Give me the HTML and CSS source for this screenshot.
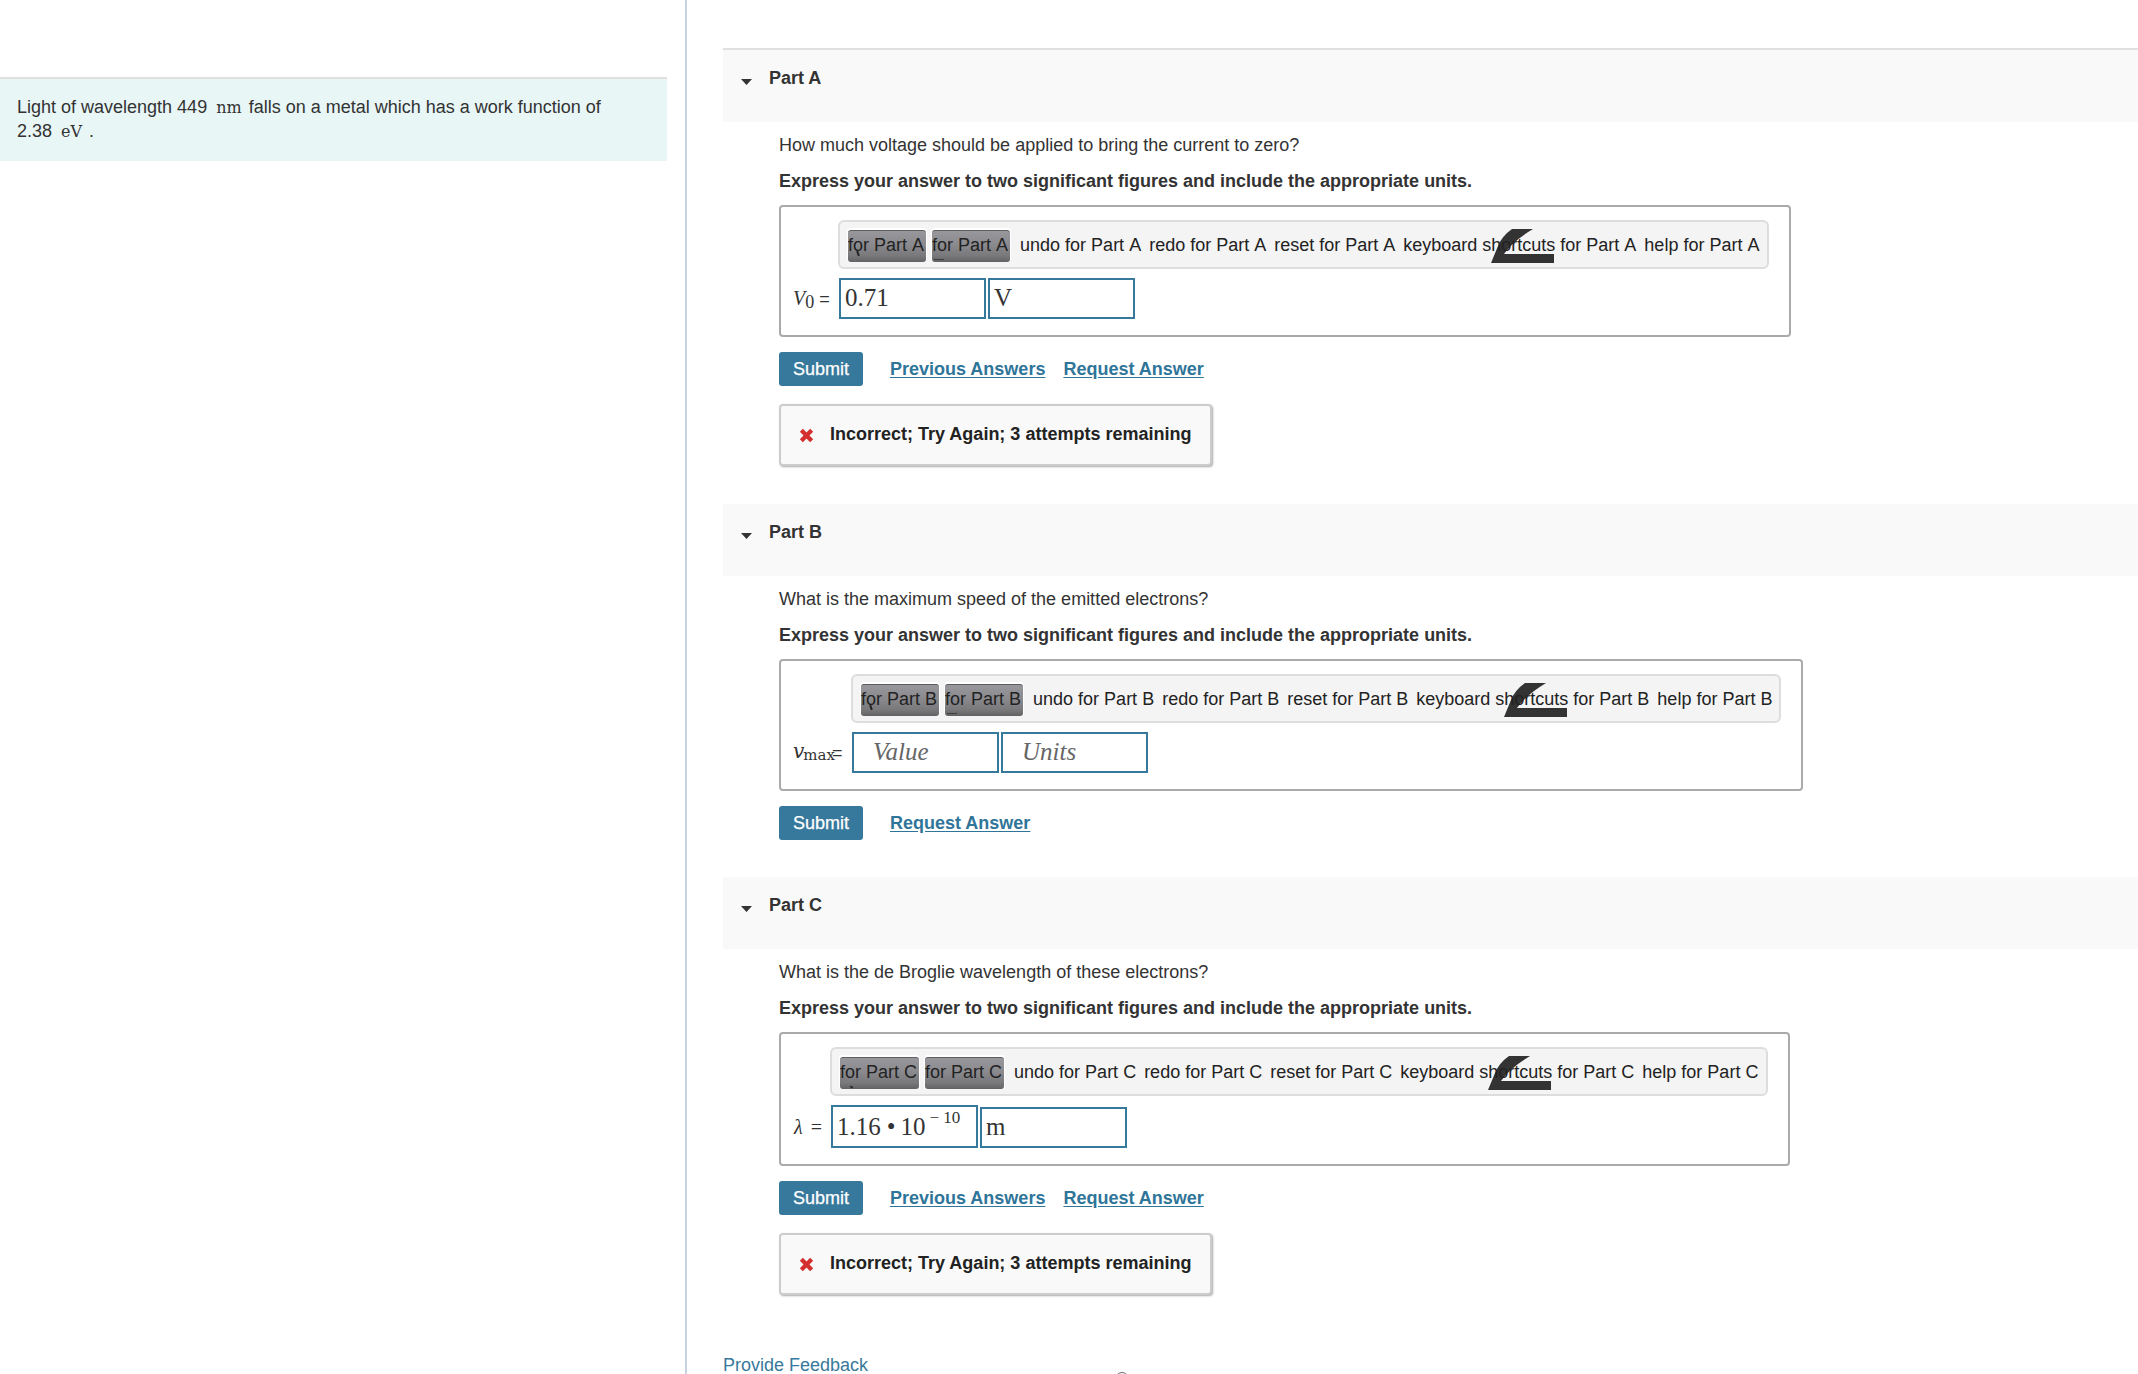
FILE: index.html
```html
<!DOCTYPE html>
<html lang="en">
<head>
<meta charset="utf-8">
<title>Part A, Part B, Part C</title>
<link rel="stylesheet" href="styles.css">
</head>
<body>
<aside class="intro-col">
  <div class="intro">Light of wavelength 449 <span class="unit">nm</span> falls on a metal which has a work function of 2.38 <span class="unit">eV</span> .</div>
</aside>
<main class="parts">

  <section class="part part-first">
    <header class="part-head">
      <svg class="caret" viewBox="0 0 11 6"><path d="M0 0H11L5.5 6Z"/></svg>
      <h2>Part A</h2>
    </header>
    <div class="part-body">
      <p class="q">How much voltage should be applied to bring the current to zero?</p>
      <p class="q strong">Express your answer to two significant figures and include the appropriate units.</p>
      <div class="answer">
        <div class="math label-a"><i>V</i><sub>0</sub><span class="eq">=</span></div>
        <div class="toolbar toolbar-a">
          <div class="btns"><span class="btn tail">for Part A</span><span class="btn dash">for Part A</span></div>
          <span>undo for Part A</span><span>redo for Part A</span><span>reset for Part A</span>
          <span class="kbd"><svg class="swoosh" viewBox="0 0 63 34"><path d="M42 0H21Q11 7 7 17L0 34H63V25H13Q22 12 42 0Z"/></svg><span class="kbd-text">keyboard shortcuts for Part A</span></span>
          <span>help for Part A</span>
        </div>
        <div class="inputs">
          <div class="field">0.71</div>
          <div class="field">V</div>
        </div>
      </div>
      <div class="actions">
        <button class="submit">Submit</button>
        <a class="link" href="#">Previous Answers</a>
        <a class="link" href="#">Request Answer</a>
      </div>
      <div class="feedback">
        <svg class="x" viewBox="0 0 14 14"><path d="M2.2 2.2L11.8 11.8M11.8 2.2L2.2 11.8"/></svg>
        <span>Incorrect; Try Again; 3 attempts remaining</span>
      </div>
    </div>
  </section>

  <section class="part part-second">
    <header class="part-head">
      <svg class="caret" viewBox="0 0 11 6"><path d="M0 0H11L5.5 6Z"/></svg>
      <h2>Part B</h2>
    </header>
    <div class="part-body">
      <p class="q">What is the maximum speed of the emitted electrons?</p>
      <p class="q strong">Express your answer to two significant figures and include the appropriate units.</p>
      <div class="answer">
        <div class="math label-b"><i class="vee">v</i><span class="maxsub">max</span><span class="eq eq-tight">=</span></div>
        <div class="toolbar">
          <div class="btns"><span class="btn tail">for Part B</span><span class="btn dash">for Part B</span></div>
          <span>undo for Part B</span><span>redo for Part B</span><span>reset for Part B</span>
          <span class="kbd"><svg class="swoosh" viewBox="0 0 63 34"><path d="M42 0H21Q11 7 7 17L0 34H63V25H13Q22 12 42 0Z"/></svg><span class="kbd-text">keyboard shortcuts for Part B</span></span>
          <span>help for Part B</span>
        </div>
        <div class="inputs">
          <div class="field placeholder">Value</div>
          <div class="field placeholder">Units</div>
        </div>
      </div>
      <div class="actions">
        <button class="submit">Submit</button>
        <a class="link" href="#">Request Answer</a>
      </div>
    </div>
  </section>

  <section class="part">
    <header class="part-head">
      <svg class="caret" viewBox="0 0 11 6"><path d="M0 0H11L5.5 6Z"/></svg>
      <h2>Part C</h2>
    </header>
    <div class="part-body">
      <p class="q">What is the de Broglie wavelength of these electrons?</p>
      <p class="q strong">Express your answer to two significant figures and include the appropriate units.</p>
      <div class="answer answer-tall">
        <div class="math label-c"><i>λ</i><span class="eq eq-wide">=</span></div>
        <div class="toolbar toolbar-c">
          <div class="btns"><span class="btn grave">for Part C</span><span class="btn">for Part C</span></div>
          <span>undo for Part C</span><span>redo for Part C</span><span>reset for Part C</span>
          <span class="kbd"><svg class="swoosh" viewBox="0 0 63 34"><path d="M42 0H21Q11 7 7 17L0 34H63V25H13Q22 12 42 0Z"/></svg><span class="kbd-text">keyboard shortcuts for Part C</span></span>
          <span>help for Part C</span>
        </div>
        <div class="inputs">
          <div class="field field-tall">1.16<span class="dot">•</span>10<sup class="exp">− 10</sup></div>
          <div class="field">m</div>
        </div>
      </div>
      <div class="actions">
        <button class="submit">Submit</button>
        <a class="link" href="#">Previous Answers</a>
        <a class="link" href="#">Request Answer</a>
      </div>
      <div class="feedback">
        <svg class="x" viewBox="0 0 14 14"><path d="M2.2 2.2L11.8 11.8M11.8 2.2L2.2 11.8"/></svg>
        <span>Incorrect; Try Again; 3 attempts remaining</span>
      </div>
    </div>
  </section>

  <a class="provide" href="#">Provide Feedback</a>
</main>
<div class="peek"></div>
</body>
</html>
```
FILE: styles.css
```css
* { box-sizing: border-box; }
html, body { margin: 0; padding: 0; }
body {
  position: relative;
  display: flex;
  width: 2138px;
  height: 1374px;
  overflow: hidden;
  background: #fff;
  color: #333;
  font: 18px/24px "Liberation Sans", Arial, sans-serif;
}

/* left column */
.intro-col {
  flex: 0 0 687px;
  padding-top: 77px;
  border-right: 2px solid #c5d3e0;
}
.intro {
  width: 667px;
  height: 84px;
  padding: 16px 40px 0 17px;
  border-top: 2px solid #e0e0e0;
  background: #e8f6f6;
}
.unit {
  font: 16px/1 "DejaVu Serif", serif;
  margin: 0 2px 0 4px;
}

/* right column */
.parts {
  flex: 1;
  min-width: 0;
  padding: 48px 0 0 36px;
}
.part { margin-bottom: 36px; }
.part-first { margin-bottom: 38px; }
.part-second { margin-bottom: 37px; }
.part-head {
  display: flex;
  align-items: flex-start;
  height: 72px;
  padding: 16px 0 0 18px;
  background: #f9f9f9;
}
.part-first .part-head { border-top: 2px solid #e0e0e0; height: 74px; }
.part-head h2 {
  margin: 0;
  font-size: 18px;
  line-height: 24px;
  font-weight: 700;
}
.caret {
  width: 11px;
  height: 6px;
  margin: 13px 17px 0 0;
  fill: #333;
}
.part-body { padding: 11px 0 0 56px; }
.q { margin: 0 0 12px; }
.strong { font-weight: 700; }

/* answer box */
.answer {
  display: grid;
  grid-template-columns: auto auto;
  column-gap: 8px;
  row-gap: 9px;
  align-items: center;
  width: fit-content;
  padding: 13px 20px 16px 12px;
  border: 2px solid #aaa;
  border-radius: 4px;
}
.math {
  grid-row: 2;
  grid-column: 1;
  font-family: "Liberation Serif", serif;
  font-size: 20px;
  line-height: 24px;
  white-space: nowrap;
}
.math sub { font-size: 18px; line-height: 0; vertical-align: -3px; }
.eq { font: 18px/24px "Liberation Sans", sans-serif; margin-left: 5px; }
.label-a { width: 37px; }
.label-b { width: 50px; }
.label-c { width: 29px; padding-left: 1px; }
.vee { font: italic 20px/24px "DejaVu Serif", serif; }
.maxsub { font: 15px/24px "DejaVu Serif", serif; vertical-align: -2px; margin-left: -1px; }
.eq-tight { margin-left: -3px; vertical-align: -1px; }
.eq-wide { margin-left: 8px; font-family: "Liberation Serif", serif; font-size: 20px; }

.toolbar {
  grid-row: 1;
  grid-column: 2;
  position: relative;
  display: flex;
  align-items: center;
  gap: 8px;
  height: 49px;
  padding: 5px 7px 4px 8px;
  border: 2px solid #ddd;
  border-radius: 6px;
  background: #f4f4f4;
  color: #222;
  white-space: nowrap;
}
.toolbar-a { font-kerning: none; padding-right: 8px; }
.toolbar-c { padding-right: 8px; }
.btns { display: flex; gap: 6px; margin-right: 2px; position: relative; top: 1px; }
.btn {
  position: relative;
  display: block;
  height: 32px;
  padding: 0 2px 0 0;
  line-height: 28px;
  border-radius: 3px;
  border-top: 1px solid #5e5e60;
  background: linear-gradient(#98989c 0, #8a8a8e 45%, #79797c 80%, #626264 100%);
  box-shadow: 0 -1px 0 1px #fff;
  color: #222;
}
.tail::after {
  content: "";
  position: absolute;
  left: 9px;
  top: 20px;
  width: 2px;
  height: 5px;
  background: #222;
  transform: rotate(-20deg);
}
.dash::after {
  content: "";
  position: absolute;
  left: 2px;
  bottom: 2px;
  width: 10px;
  height: 1px;
  background: #3f3f40;
}
.grave::after {
  content: "";
  position: absolute;
  left: 10px;
  bottom: 1px;
  width: 3px;
  height: 2px;
  background: #2a2a2a;
  transform: rotate(30deg);
}
.kbd { position: relative; }
.kbd-text { position: relative; }
.swoosh {
  position: absolute;
  left: 88px;
  top: -4px;
  width: 63px;
  height: 34px;
  fill: #333;
}

/* inputs */
.inputs {
  grid-row: 2;
  grid-column: 2;
  display: flex;
  align-items: flex-end;
  gap: 2px;
  margin-left: 1px;
}
.field {
  width: 147px;
  height: 41px;
  padding: 0 4px;
  border: 2px solid #37799c;
  background: #fff;
  font: 25px/35px "Liberation Serif", serif;
  white-space: nowrap;
}
.field-tall { height: 43px; line-height: 39px; }
.placeholder {
  padding-left: 19px;
  color: #666;
  font-style: italic;
}
.dot { margin: 0 5px 0 6px; font-size: 25px; }
.exp {
  font-size: 17px;
  line-height: 0;
  vertical-align: 12px;
  margin-left: 4px;
}

/* actions */
.actions {
  display: flex;
  align-items: center;
  gap: 18px;
  margin-top: 15px;
}
.submit {
  width: 84px;
  height: 34px;
  margin-right: 9px;
  padding: 0;
  border: 0;
  border-radius: 3px;
  background: #37799c;
  color: #fff;
  font: 18px/34px "Liberation Sans", sans-serif;
  -webkit-text-stroke: .25px #fff;
}
.link {
  color: #2f7599;
  font-weight: 700;
  text-decoration: underline;
  text-underline-offset: 2px;
}

/* feedback */
.feedback {
  display: flex;
  align-items: center;
  gap: 16px;
  width: fit-content;
  height: 62px;
  margin-top: 18px;
  padding: 0 19px 2px 18px;
  border: 2px solid #ccc;
  border-radius: 4px;
  background: #f9f9f9;
  box-shadow: 1px 1px 2px #aaa;
  color: #222;
  font-weight: 700;
}
.x {
  flex: none;
  width: 15px;
  height: 15px;
  margin-top: 2px;
  fill: none;
  stroke: #d32f2f;
  stroke-width: 4;
}

.provide {
  display: block;
  width: fit-content;
  margin-top: 58px;
  color: #37799c;
  text-decoration: none;
}
.peek {
  position: absolute;
  left: 1115px;
  bottom: -12px;
  width: 14px;
  height: 14px;
  border: 1px solid #667;
  border-radius: 50%;
}
```
